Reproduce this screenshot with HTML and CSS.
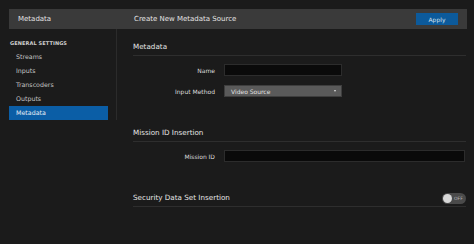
FILE: index.html
```html
<!DOCTYPE html>
<html>
<head>
<meta charset="utf-8">
<link rel="stylesheet" href="styles.css">
</head>
<body>
<div class="app">
  <header class="topbar">
    <div class="tb-left">Metadata</div>
    <div class="tb-right">
      <span class="tb-title">Create New Metadata Source</span>
      <button class="apply">Apply</button>
    </div>
  </header>
  <div class="main">
    <nav class="sidebar">
      <div class="side-title">GENERAL SETTINGS</div>
      <div class="side-item">Streams</div>
      <div class="side-item">Inputs</div>
      <div class="side-item">Transcoders</div>
      <div class="side-item">Outputs</div>
      <div class="side-item active">Metadata</div>
    </nav>
    <section class="content">
      <div class="sec-head">Metadata</div>
      <div class="row first">
        <label class="lbl">Name</label>
        <div class="input short"></div>
      </div>
      <div class="row">
        <label class="lbl">Input Method</label>
        <div class="select short"><span>Video Source</span><span class="caret"></span></div>
      </div>
      <div class="sec-head gap">Mission ID Insertion</div>
      <div class="row first">
        <label class="lbl">Mission ID</label>
        <div class="input long"></div>
      </div>
      <div class="sec-head gap toggle-row">
        <span>Security Data Set Insertion</span>
        <span class="toggle"><span class="knob"></span><span class="off">OFF</span></span>
      </div>
    </section>
  </div>
</div>
</body>
</html>
```
FILE: styles.css
```css
html, body {
  margin: 0;
  padding: 0;
  background: #1b1b1b;
}
body {
  font-family: "DejaVu Sans", Verdana, sans-serif;
  color: #d8d8d8;
}
.app {
  margin: 9px 0 0 9px;
  width: 458px;
}
.topbar {
  display: flex;
  height: 20px;
  background: #3a3a3a;
  align-items: center;
}
.tb-left {
  width: 99px;
  padding-left: 9px;
  font-size: 7px;
  color: #e4e4e4;
}
.tb-right {
  flex: 1;
  display: flex;
  align-items: center;
  justify-content: space-between;
  padding: 0 9px 0 17px;
}
.tb-title {
  font-size: 7px;
  color: #e4e4e4;
}
.apply {
  width: 42px;
  height: 12px;
  border: none;
  padding: 0;
  background: #0c5a9b;
  color: #d6e2ee;
  font-family: "DejaVu Sans", Verdana, sans-serif;
  font-size: 6px;
}
.main {
  display: flex;
  align-items: flex-start;
}
.sidebar {
  width: 107px;
  height: 84px;
  padding-top: 7px;
  border-right: 1px solid #2b2b2b;
}
.side-title {
  height: 14px;
  line-height: 14px;
  padding-left: 1px;
  font-size: 5px;
  font-weight: bold;
  color: #cfcfcf;
  letter-spacing: 0.1px;
}
.side-item {
  width: 92px;
  height: 14px;
  line-height: 14px;
  padding-left: 7px;
  font-size: 6.3px;
  color: #c4c4c4;
}
.side-item.active {
  background: #0b5ea6;
  color: #e8eef5;
}
.content {
  flex: 1;
  padding: 0 1px 0 16px;
}
.sec-head {
  margin-top: 10px;
  height: 16px;
  line-height: 16px;
  border-bottom: 1px solid #2e2e2e;
  font-size: 7.2px;
  color: #e6e6e6;
}
.sec-head.gap {
  margin-top: 28px;
}
.toggle-row {
  display: flex;
  align-items: center;
  justify-content: space-between;
}
.toggle {
  display: flex;
  align-items: center;
  width: 24px;
  height: 11px;
  border-radius: 6px;
  background: #4a4a4a;
  box-sizing: border-box;
  padding-left: 1px;
  margin-top: 1px;
}
.knob {
  width: 9px;
  height: 9px;
  border-radius: 50%;
  background: #d8d8d8;
}
.off {
  font-size: 4.5px;
  color: #b8b8b8;
  margin-left: 2px;
}
.row {
  display: flex;
  align-items: center;
  margin-top: 9px;
}
.row.first {
  margin-top: 8px;
}
.lbl {
  width: 82px;
  margin-right: 9px;
  text-align: right;
  font-size: 6px;
  color: #dedede;
}
.input {
  height: 12px;
  box-sizing: border-box;
  background: #0a0a0a;
  border: 1px solid #2c2c2c;
}
.short {
  width: 118px;
}
.long {
  width: 241px;
}
.select {
  height: 12px;
  box-sizing: border-box;
  background: #5a5a5a;
  border: 1px solid #3e3e3e;
  display: flex;
  align-items: center;
  justify-content: space-between;
  padding: 0 5px 0 6px;
  font-size: 6px;
  color: #e0e0e0;
}
.caret {
  width: 0;
  height: 0;
  border-left: 1.5px solid transparent;
  border-right: 1.5px solid transparent;
  border-top: 2px solid #e0e0e0;
}
```
